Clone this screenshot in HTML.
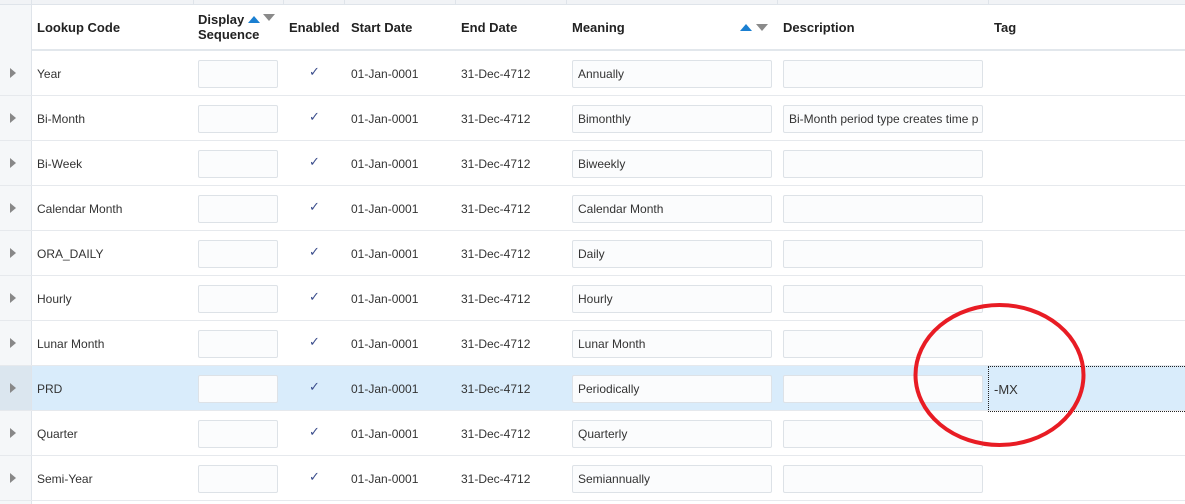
<!DOCTYPE html>
<html><head><meta charset="utf-8"><style>
*{margin:0;padding:0;box-sizing:border-box}
body{width:1185px;height:504px;overflow:hidden;background:#fff;font-family:"Liberation Sans",Arial,sans-serif;position:relative;color:#333}
.top{position:absolute;left:0;top:0;width:1185px;height:5px;background:#f1f3f6;border-bottom:1px solid #dfe4ea}
.vl{position:absolute;top:0;width:1px;height:5px;background:#dfe4ea}
.rh{position:absolute;left:0;top:5px;width:32px;height:499px;background:#f5f7f9;border-right:1px solid #dfe4ea}
.h{position:absolute;font-size:13px;font-weight:bold;color:#222}
.row{position:absolute;left:0;width:1185px;height:45px;border-bottom:1px solid #e6e9ed}
.row.sel{background:#d9ecfb}
.row.sel .rhc{background:#dbe6ef}
.rhc{position:absolute;left:0;top:0;width:32px;height:44px;border-right:1px solid #dfe4ea;background:#f5f7f9}
.tri{position:absolute;left:10px;top:17px;width:0;height:0;border-top:5px solid transparent;border-bottom:5px solid transparent;border-left:6px solid #888}
.t{position:absolute;top:16px;font-size:12px;color:#333}
.in{position:absolute;top:9px;height:28px;background:#fbfcfd;border:1px solid #dde2e7;border-radius:2px}
.in span{position:absolute;left:5px;top:6px;font-size:12px;color:#333;white-space:nowrap;overflow:hidden;right:2px}
.ck{position:absolute;left:309px;top:13px;font-size:13px;color:#3b4d8c}
.up{display:inline-block;width:0;height:0;border-left:6px solid transparent;border-right:6px solid transparent;border-bottom:7px solid #1a7fd1}
.dn{display:inline-block;width:0;height:0;border-left:6px solid transparent;border-right:6px solid transparent;border-top:7px solid #8a8a8a}
</style></head><body>
<div class="top"></div>
<div class="vl" style="left:31px"></div><div class="vl" style="left:193px"></div><div class="vl" style="left:283px"></div><div class="vl" style="left:344px"></div><div class="vl" style="left:455px"></div><div class="vl" style="left:566px"></div><div class="vl" style="left:777px"></div><div class="vl" style="left:988px"></div>
<div class="rh"></div>
<div style="position:absolute;left:32px;top:49px;width:1153px;height:2px;background:#e2e7ec"></div>
<div class="h" style="left:37px;top:20px">Lookup Code</div>
<div class="h" style="left:198px;top:12px;line-height:15px">Display <span class="up" style="vertical-align:1px"></span> <span class="dn" style="vertical-align:3px"></span><br>Sequence</div>
<div class="h" style="left:289px;top:20px">Enabled</div>
<div class="h" style="left:351px;top:20px">Start Date</div>
<div class="h" style="left:461px;top:20px">End Date</div>
<div class="h" style="left:572px;top:20px">Meaning</div>
<div style="position:absolute;left:740px;top:22px;line-height:10px"><span class="up"></span> <span class="dn"></span></div>
<div class="h" style="left:783px;top:20px">Description</div>
<div class="h" style="left:994px;top:20px">Tag</div>

<div class="row" style="top:51px"><div class="rhc"><div class="tri"></div></div><div class="t" style="left:37px">Year</div><div class="in" style="left:198px;width:80px"></div><div class="ck">✓</div><div class="t" style="left:351px">01-Jan-0001</div><div class="t" style="left:461px">31-Dec-4712</div><div class="in" style="left:572px;width:200px"><span>Annually</span></div><div class="in" style="left:783px;width:200px"></div></div>
<div class="row" style="top:96px"><div class="rhc"><div class="tri"></div></div><div class="t" style="left:37px">Bi-Month</div><div class="in" style="left:198px;width:80px"></div><div class="ck">✓</div><div class="t" style="left:351px">01-Jan-0001</div><div class="t" style="left:461px">31-Dec-4712</div><div class="in" style="left:572px;width:200px"><span>Bimonthly</span></div><div class="in" style="left:783px;width:200px"><span>Bi-Month period type creates time p</span></div></div>
<div class="row" style="top:141px"><div class="rhc"><div class="tri"></div></div><div class="t" style="left:37px">Bi-Week</div><div class="in" style="left:198px;width:80px"></div><div class="ck">✓</div><div class="t" style="left:351px">01-Jan-0001</div><div class="t" style="left:461px">31-Dec-4712</div><div class="in" style="left:572px;width:200px"><span>Biweekly</span></div><div class="in" style="left:783px;width:200px"></div></div>
<div class="row" style="top:186px"><div class="rhc"><div class="tri"></div></div><div class="t" style="left:37px">Calendar Month</div><div class="in" style="left:198px;width:80px"></div><div class="ck">✓</div><div class="t" style="left:351px">01-Jan-0001</div><div class="t" style="left:461px">31-Dec-4712</div><div class="in" style="left:572px;width:200px"><span>Calendar Month</span></div><div class="in" style="left:783px;width:200px"></div></div>
<div class="row" style="top:231px"><div class="rhc"><div class="tri"></div></div><div class="t" style="left:37px">ORA_DAILY</div><div class="in" style="left:198px;width:80px"></div><div class="ck">✓</div><div class="t" style="left:351px">01-Jan-0001</div><div class="t" style="left:461px">31-Dec-4712</div><div class="in" style="left:572px;width:200px"><span>Daily</span></div><div class="in" style="left:783px;width:200px"></div></div>
<div class="row" style="top:276px"><div class="rhc"><div class="tri"></div></div><div class="t" style="left:37px">Hourly</div><div class="in" style="left:198px;width:80px"></div><div class="ck">✓</div><div class="t" style="left:351px">01-Jan-0001</div><div class="t" style="left:461px">31-Dec-4712</div><div class="in" style="left:572px;width:200px"><span>Hourly</span></div><div class="in" style="left:783px;width:200px"></div></div>
<div class="row" style="top:321px"><div class="rhc"><div class="tri"></div></div><div class="t" style="left:37px">Lunar Month</div><div class="in" style="left:198px;width:80px"></div><div class="ck">✓</div><div class="t" style="left:351px">01-Jan-0001</div><div class="t" style="left:461px">31-Dec-4712</div><div class="in" style="left:572px;width:200px"><span>Lunar Month</span></div><div class="in" style="left:783px;width:200px"></div></div>
<div class="row sel" style="top:366px"><div class="rhc"><div class="tri"></div></div><div class="t" style="left:37px">PRD</div><div class="in" style="left:198px;width:80px"></div><div class="ck">✓</div><div class="t" style="left:351px">01-Jan-0001</div><div class="t" style="left:461px">31-Dec-4712</div><div class="in" style="left:572px;width:200px"><span>Periodically</span></div><div class="in" style="left:783px;width:200px"></div><div style="position:absolute;left:988px;top:0;width:197px;height:46px;border:1px dotted #222;border-right:none"></div><div class="t" style="left:994px;font-size:13px">-MX</div></div>
<div class="row" style="top:411px"><div class="rhc"><div class="tri"></div></div><div class="t" style="left:37px">Quarter</div><div class="in" style="left:198px;width:80px"></div><div class="ck">✓</div><div class="t" style="left:351px">01-Jan-0001</div><div class="t" style="left:461px">31-Dec-4712</div><div class="in" style="left:572px;width:200px"><span>Quarterly</span></div><div class="in" style="left:783px;width:200px"></div></div>
<div class="row" style="top:456px"><div class="rhc"><div class="tri"></div></div><div class="t" style="left:37px">Semi-Year</div><div class="in" style="left:198px;width:80px"></div><div class="ck">✓</div><div class="t" style="left:351px">01-Jan-0001</div><div class="t" style="left:461px">31-Dec-4712</div><div class="in" style="left:572px;width:200px"><span>Semiannually</span></div><div class="in" style="left:783px;width:200px"></div></div>

<svg style="position:absolute;left:0;top:0" width="1185" height="504"><ellipse cx="999.5" cy="375" rx="84" ry="70" fill="none" stroke="#e81c24" stroke-width="4"/></svg>
</body></html>
